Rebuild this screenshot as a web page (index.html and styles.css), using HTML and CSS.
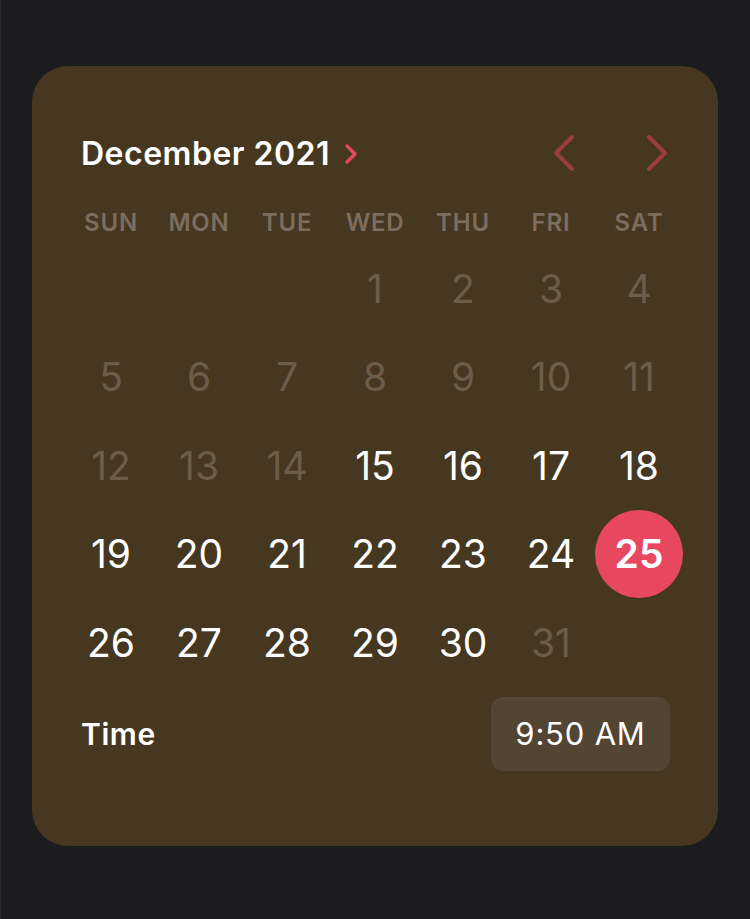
FILE: index.html
```html
<!DOCTYPE html>
<html lang="en">
<head>
<meta charset="utf-8">
<title>Date picker</title>
<link rel="stylesheet" href="styles.css">
</head>
<body>
<div class="page">
  <div class="card">
    <div class="header">
      <div class="month">
        <span class="month-label">December 2021</span>
        <svg class="month-chev" width="14" height="22" viewBox="0 0 14 22"><path d="M3 3 L11 11 L3 19" fill="none" stroke="#e8485f" stroke-width="3.4" stroke-linecap="round" stroke-linejoin="round"/></svg>
      </div>
      <div class="nav">
        <svg class="nav-btn" width="24" height="38" viewBox="0 0 24 38"><path d="M20 3 L4 19 L20 35" fill="none" stroke="#9b3d3c" stroke-width="4" stroke-linecap="round" stroke-linejoin="round"/></svg>
        <svg class="nav-btn" width="24" height="38" viewBox="0 0 24 38"><path d="M4 3 L20 19 L4 35" fill="none" stroke="#9b3d3c" stroke-width="4" stroke-linecap="round" stroke-linejoin="round"/></svg>
      </div>
    </div>
    <div class="grid">
      <div class="wd">SUN</div><div class="wd">MON</div><div class="wd">TUE</div><div class="wd">WED</div><div class="wd">THU</div><div class="wd">FRI</div><div class="wd">SAT</div>
    </div>
    <div class="grid days">
      <div class="day"></div><div class="day"></div><div class="day"></div>
      <div class="day dim">1</div><div class="day dim">2</div><div class="day dim">3</div><div class="day dim">4</div>
      <div class="day dim">5</div><div class="day dim">6</div><div class="day dim">7</div><div class="day dim">8</div><div class="day dim">9</div><div class="day dim">10</div><div class="day dim">11</div>
      <div class="day dim">12</div><div class="day dim">13</div><div class="day dim">14</div><div class="day">15</div><div class="day">16</div><div class="day">17</div><div class="day">18</div>
      <div class="day">19</div><div class="day">20</div><div class="day">21</div><div class="day">22</div><div class="day">23</div><div class="day">24</div><div class="day"><span class="sel">25</span></div>
      <div class="day">26</div><div class="day">27</div><div class="day">28</div><div class="day">29</div><div class="day">30</div><div class="day dim">31</div><div class="day"></div>
    </div>
    <div class="time-row">
      <span class="time-label">Time</span>
      <span class="time-pill">9:50 AM</span>
    </div>
  </div>
</div>
</body>
</html>
```
FILE: styles.css
```css
html, body {
  margin: 0;
  padding: 0;
  background: #1c1c1e;
}
body {
  width: 750px;
  height: 919px;
  border-left: 1px solid #2e2e30;
  box-sizing: border-box;
  font-family: Inter, "Open Sans", sans-serif;
  color: #ffffff;
}
.page {
  padding: 66px 32px 0 31px;
}
.card {
  background: #463720;
  border-radius: 36px;
  height: 780px;
  box-sizing: border-box;
  padding: 66px 48px 0 49px;
}
.header {
  height: 42px;
  display: flex;
  align-items: center;
  justify-content: space-between;
  margin-bottom: 34px;
}
.month {
  display: flex;
  align-items: center;
  gap: 14px;
}
.month-label {
  font-size: 32px;
  font-weight: 600;
  letter-spacing: 0.5px;
}
.month-chev {
  display: block;
  margin-top: 2px;
}
.nav {
  display: flex;
  gap: 69px;
  margin-right: 1px;
}
.nav-btn {
  display: block;
}
.grid {
  display: grid;
  grid-template-columns: repeat(7, 88px);
  margin: 0 -14px 0 -14px;
}
.wd {
  height: 30px;
  line-height: 30px;
  text-align: center;
  font-size: 24px;
  font-weight: 600;
  color: #7b6e5e;
  letter-spacing: 0.8px;
}
.days {
  grid-auto-rows: 88.5px;
  margin-top: 6px;
}
.day {
  display: flex;
  align-items: center;
  justify-content: center;
  font-size: 39px;
  font-weight: 400;
  color: #ffffff;
}
.day.dim {
  color: #6b5d4a;
}
.sel {
  width: 88px;
  height: 88px;
  border-radius: 50%;
  background: #e8485f;
  display: flex;
  align-items: center;
  justify-content: center;
  font-weight: 600;
}
.time-row {
  display: flex;
  align-items: center;
  justify-content: space-between;
  margin-top: 10px;
}
.time-label {
  font-size: 30px;
  font-weight: 600;
  letter-spacing: 0.6px;
}
.time-pill {
  background: #524534;
  border-radius: 12px;
  width: 179px;
  height: 74px;
  display: flex;
  align-items: center;
  justify-content: center;
  font-size: 31px;
  font-weight: 400;
  letter-spacing: 0.8px;
}
```
